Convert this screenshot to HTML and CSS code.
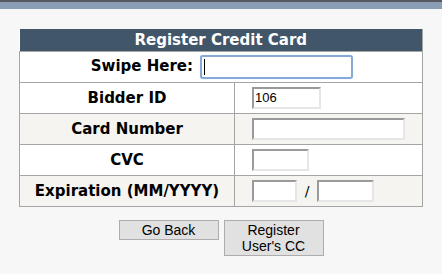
FILE: index.html
```html
<!DOCTYPE html>
<html lang="en">
  <head>
    <meta charset="UTF-8" />
    <title>Register Credit Card</title>
    <link rel="stylesheet" href="styles.css">
  </head>

  <body>
    <div class="topbar"></div>
    <div class="page">
      <table class="cc-form">
        <tr>
          <th colspan="2" class="title">Register Credit Card</th>
        </tr>
        <tr>
          <td colspan="2" class="swipe">
            <label for="swipe">Swipe Here:</label>
            <span class="swipe-input"><span class="caret"></span></span>
          </td>
        </tr>
        <tr>
          <td class="label">Bidder ID</td>
          <td class="value"><input type="text" class="field w-bidder" value="106"></td>
        </tr>
        <tr class="shade">
          <td class="label">Card Number</td>
          <td class="value"><input type="text" class="field w-card"></td>
        </tr>
        <tr>
          <td class="label">CVC</td>
          <td class="value"><input type="text" class="field w-cvc"></td>
        </tr>
        <tr class="shade">
          <td class="label">Expiration (MM/YYYY)</td>
          <td class="value">
            <input type="text" class="field w-month"><span class="slash">/</span><input type="text" class="field w-year">
          </td>
        </tr>
      </table>
      <div class="actions">
        <button class="btn">Go Back</button>
        <button class="btn">Register<br>User's CC</button>
      </div>
    </div>
  </body>
</html>
```

FILE: styles.css
```css
* {
  padding: 0;
  margin: 0;
  box-sizing: border-box;
}

body {
  width: 442px;
  height: 274px;
  background: #f7f7f7;
  overflow: hidden;
  font-family: "DejaVu Sans", Verdana, sans-serif;
}

.topbar {
  height: 9px;
  border-top: 2px solid #55595e;
  background: #8b9db5;
}

.page {
  padding: 20px 0 0 19px;
}

.cc-form {
  width: 404px;
  border-collapse: collapse;
  background: white;
}

.cc-form th.title {
  height: 22px;
  background: #415669;
  color: white;
  font-size: 15px;
  font-weight: bold;
  text-align: center;
  border: none;
  border-bottom: 1px solid #a5a5a5;
  border-right: 1px solid #a5a5a5;
  padding: 0;
  line-height: 20px;
}

.cc-form td {
  height: 31px;
  border: 1px solid #a5a5a5;
  padding: 0;
  vertical-align: middle;
}

.cc-form tr.shade td {
  background: #f5f4f1;
}

.cc-form td.label {
  width: 215px;
  text-align: center;
  font-size: 15px;
  font-weight: bold;
  color: black;
}

.cc-form td.value {
  padding-left: 17px;
}

.cc-form td.swipe {
  text-align: center;
  font-size: 15px;
  font-weight: bold;
  padding-left: 2px;
}

.swipe label {
  margin-right: 2px;
}

.field {
  height: 22px;
  border: 2px solid;
  border-color: #9a9a9a #e6e6e6 #e6e6e6 #9a9a9a;
  background: white;
  font-family: "Liberation Sans", Arial, sans-serif;
  font-size: 13px;
  padding: 0 1px;
  vertical-align: middle;
  outline: none;
}

.swipe-input {
  display: inline-flex;
  align-items: center;
  width: 153px;
  height: 24px;
  padding-left: 2px;
  background: white;
  border: 2px solid #86aad8;
  border-radius: 3px;
  box-shadow: 0 0 1px #c0d4ee;
  vertical-align: middle;
}

.caret {
  width: 1px;
  height: 16px;
  background: black;
}

.w-bidder {
  width: 69px;
}

.w-card {
  width: 153px;
}

.w-cvc {
  width: 57px;
}

.w-month {
  width: 45px;
}

.w-year {
  width: 57px;
}

.slash {
  display: inline-block;
  width: 20px;
  text-align: center;
  font-family: "DejaVu Sans", Verdana, sans-serif;
  font-size: 14px;
  vertical-align: middle;
}

.actions {
  display: flex;
  justify-content: center;
  align-items: flex-start;
  gap: 5px;
  width: 404px;
  margin-top: 13px;
}

.btn {
  width: 100px;
  min-height: 20px;
  padding: 1px 0;
  background: #e1e1e1;
  border: 1px solid #adadad;
  font-family: "Liberation Sans", Arial, sans-serif;
  font-size: 14px;
  line-height: 16px;
  color: black;
}
```
